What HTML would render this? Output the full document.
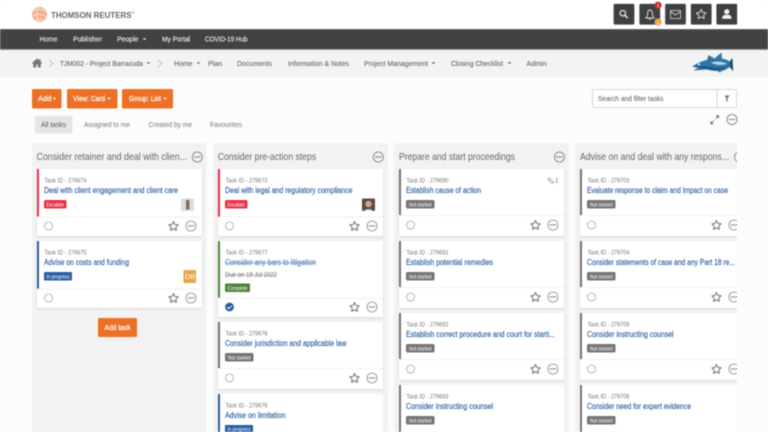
<!DOCTYPE html>
<html lang="en"><head><meta charset="utf-8"><title>Tasks</title>
<style>
html,body{margin:0;padding:0;width:768px;height:432px;overflow:hidden;background:#fcfcfc}
svg{display:block;position:absolute;left:0;top:0;filter:blur(.45px);font-family:"Liberation Sans",sans-serif}
.n{fill:#f2f2f2;font-size:7.2px;stroke:#f2f2f2;stroke-width:.1px}
.s{fill:#666;font-size:7.6px;stroke:#666;stroke-width:.1px}
.b{fill:#fff;font-size:7.6px;stroke:#fff;stroke-width:.2px}
.t{fill:#777;font-size:7.4px}
.h{fill:#666;font-size:10.4px}
.i{fill:#777;font-size:6.4px}
.k{fill:#2f60a3;font-size:8px;stroke:#2f60a3;stroke-width:.14px}
.g{fill:#fff;font-size:5.4px}
</style></head><body>
<svg width="768" height="432" viewBox="0 0 768 432" xmlns="http://www.w3.org/2000/svg">
<defs>
<filter id="sh" x="-5%" y="-10%" width="110%" height="120%"><feDropShadow dx="0" dy="1" stdDeviation="1" flood-color="#000" flood-opacity=".12"/></filter>
<g id="foot">
<circle cx="11.500" cy="0" r="4" fill="#fff" stroke="#a8a8a8" stroke-width=".8"/>
<path d="M136.500 -4.600l1.400 3 3.300.4-2.400 2.250.62 3.250-2.920-1.620-2.920 1.620.62-3.250-2.400-2.250 3.300-.4z" fill="none" stroke="#666" stroke-width=".9" stroke-linejoin="round"/>
<circle cx="154" cy="0" r="5" fill="#fff" stroke="#8a8a8a" stroke-width=".8"/>
<circle cx="151.800" cy="0" r=".7" fill="#555"/><circle cx="154" cy="0" r=".7" fill="#555"/><circle cx="156.200" cy="0" r=".7" fill="#555"/>
</g>
<g id="dots">
<circle cx="0" cy="0" r="5" fill="none" stroke="#777" stroke-width=".8"/>
<circle cx="-2.200" cy="0" r=".7" fill="#555"/><circle cx="0" cy="0" r=".7" fill="#555"/><circle cx="2.200" cy="0" r=".7" fill="#555"/>
</g>
<g id="ns"><rect x="7" y="31" width="28.500" height="8.500" rx="1.500" fill="#757575"/><text x="10" y="37.300" class="g" textLength="22.500" lengthAdjust="spacingAndGlyphs">Not started</text></g>
<g id="ip"><rect x="7" y="31" width="28" height="8.500" rx="1" fill="#2a5ea5"/><text x="9.500" y="37.300" class="g" textLength="23" lengthAdjust="spacingAndGlyphs">In progress</text></g>
<g id="es"><rect x="7" y="31" width="22.500" height="8.500" rx="1.500" fill="#ea3049"/><text x="9.500" y="37.300" class="g" textLength="17.500" lengthAdjust="spacingAndGlyphs">Escalate</text></g>
<clipPath id="board"><rect x="0" y="140" width="737" height="292"/></clipPath>
<path id="car" d="M-1.800 -.8h3.600l-1.800 2z"/>
<path id="chev" d="M-1.800 -3.600l3.600 3.600-3.600 3.600" fill="none" stroke="#aaa" stroke-width=".7"/>
</defs>

<rect x="0" y="0" width="768" height="432" fill="#fcfcfc"/>
<rect x="0" y="0" width="768" height="29" fill="#fff"/>

<!-- logo -->
<circle cx="39.500" cy="14.500" r="7.500" fill="#f4b08c"/>
<path d="M33.500 12c3-4 9-4 12 0M33 16c4-3 9-2 13 1M36 20.500c2-2 5-2 7 0M39 7.500c-3 4-3 10 0 14" fill="none" stroke="#fde9dd" stroke-width=".8"/>
<text x="51" y="17.800" fill="#666" font-size="8.500" font-weight="bold" textLength="80.500" lengthAdjust="spacingAndGlyphs">THOMSON REUTERS</text>
<text x="131.500" y="14" fill="#666" font-size="3.500">®</text>

<!-- top right buttons -->
<g fill="#404040" stroke="#ccc" stroke-width=".5">
<rect x="613.500" y="3.700" width="21" height="21" rx="1.500"/>
<rect x="639.300" y="3.700" width="21" height="21" rx="1.500"/>
<rect x="665" y="3.700" width="21" height="21" rx="1.500"/>
<rect x="690.700" y="3.700" width="21" height="21" rx="1.500"/>
<rect x="716.300" y="3.700" width="21" height="21" rx="1.500"/>
</g>
<circle cx="622.800" cy="13.200" r="2.700" fill="none" stroke="#e4e4e4" stroke-width="1.300"/>
<path d="M624.800 15.200l2.800 2.800" stroke="#e4e4e4" stroke-width="1.600"/>
<path d="M646 18h8c-1.300-1-1.500-2.500-1.600-4.500-.1-2-1-3.500-2.400-3.500s-2.300 1.500-2.400 3.500c-.1 2-.3 3.500-1.600 4.500zM648.800 19.300h2.400" fill="none" stroke="#e4e4e4" stroke-width=".9"/>
<circle cx="658" cy="5.200" r="3.600" fill="#c62f2f"/>
<circle cx="658" cy="22" r="3.600" fill="#eda33f"/>
<text x="656.900" y="7" fill="#fff" font-size="4.500">1</text>
<text x="656.900" y="23.800" fill="#fff" font-size="4.500">1</text>
<rect x="670.500" y="10.500" width="10" height="8" fill="none" stroke="#d8d8d8" stroke-width=".8"/>
<path d="M670.500 11.500l5 3.500 5-3.500" fill="none" stroke="#d8d8d8" stroke-width=".8"/>
<path d="M701.200 9.300l1.500 3.100 3.400.5-2.500 2.300.6 3.300-3-1.600-3 1.600.6-3.300-2.500-2.300 3.400-.5z" fill="none" stroke="#e4e4e4" stroke-width=".9" stroke-linejoin="round"/>
<circle cx="726.800" cy="11.700" r="2.600" fill="#f2f2f2"/>
<path d="M722 18.700c0-2.500 1.500-3.700 3-4h3.600c1.500.3 3 1.500 3 4z" fill="#f2f2f2"/>

<!-- main nav -->
<rect x="0" y="29" width="768" height="21" fill="#424242"/>
<rect x="0" y="29" width="768" height=".8" fill="#6a6a6a"/>
<rect x="0" y="49" width="768" height="1" fill="#9a9a9a"/>
<text x="39.500" y="41.500" class="n" textLength="18" lengthAdjust="spacingAndGlyphs">Home</text>
<text x="73" y="41.500" class="n" textLength="29" lengthAdjust="spacingAndGlyphs">Publisher</text>
<text x="117" y="41.500" class="n" textLength="21.500" lengthAdjust="spacingAndGlyphs">People</text>
<use href="#car" x="144.500" y="39" fill="#eee"/>
<text x="162" y="41.500" class="n" textLength="28" lengthAdjust="spacingAndGlyphs">My Portal</text>
<text x="205" y="41.500" class="n" textLength="42.500" lengthAdjust="spacingAndGlyphs">COVID-19 Hub</text>

<!-- sub nav -->
<rect x="0" y="50" width="768" height="27" fill="#f3f3f3"/>
<path d="M37 58.500l-5.200 4.500.6.700.9-.7v4.500h2.900v-2.800h1.700v2.800h2.900v-4.500l.9.700.6-.7-1.700-1.500v-2.500h-1.300v1.300z" fill="#777"/>
<use href="#chev" x="51" y="63.500"/>
<text x="60" y="66" class="s" textLength="83" lengthAdjust="spacingAndGlyphs">TJM002 - Project Barracuda</text>
<use href="#car" x="148.500" y="63" fill="#666"/>
<use href="#chev" x="160" y="63.500"/>
<text x="174" y="66" class="s" textLength="18.500" lengthAdjust="spacingAndGlyphs">Home</text>
<use href="#car" x="198.500" y="63" fill="#666"/>
<text x="208" y="66" class="s" textLength="14" lengthAdjust="spacingAndGlyphs">Plan</text>
<text x="237" y="66" class="s" textLength="35" lengthAdjust="spacingAndGlyphs">Documents</text>
<text x="288" y="66" class="s" textLength="61" lengthAdjust="spacingAndGlyphs">Information &amp; Notes</text>
<text x="364" y="66" class="s" textLength="64" lengthAdjust="spacingAndGlyphs">Project Management</text>
<use href="#car" x="433.500" y="63" fill="#666"/>
<text x="451" y="66" class="s" textLength="52" lengthAdjust="spacingAndGlyphs">Closing Checklist</text>
<use href="#car" x="509.500" y="63" fill="#666"/>
<text x="526.500" y="66" class="s" textLength="20" lengthAdjust="spacingAndGlyphs">Admin</text>

<!-- fish -->
<path d="M692 66.500c4-2.500 9-5.500 15-6.500l1.500-5 6 3.500 7-6 .5 6c3 .5 5.500 1.500 7.500 3l2.500-3.500 .7 12.500-3.200-3.500c-2.500 2-5 3.500-8 4l-1.500 1.500-2.500-1.500c-4 0-7-.5-10.500-1.500l-7 .5c-3 .3-5 .6-6 .2 1-1 3-1.700 5-2.200z" fill="#2f76a6"/>
<path d="M711 62.500c5-1.500 12-1 16 1.300-4 1.800-11.500 1.700-16-1.300z" fill="#b5d6e6"/>
<path d="M694 67.300l9-1.300 8 1c5 1.300 12 1 17-.8-4 3.300-11 4.800-18 3.300-4-.7-8-1.300-16-2.200z" fill="#1f5a82"/>
<circle cx="699" cy="64.300" r="1.100" fill="#e8f2f7"/>
<path d="M730 62l2.500-3.500.7 12.800-3.200-4z" fill="#1f4a68"/>

<!-- toolbar -->
<rect x="32" y="89" width="29.500" height="19.500" rx="1.500" fill="#ec7125"/>
<text x="38" y="101" class="b" textLength="13.500" lengthAdjust="spacingAndGlyphs">Add</text>
<use href="#car" x="54.500" y="98.500" fill="#fff"/>
<rect x="67" y="89" width="50.500" height="19.500" rx="1.500" fill="#ec7125"/>
<text x="73" y="101" class="b" textLength="32" lengthAdjust="spacingAndGlyphs">View: Card</text>
<use href="#car" x="109" y="98.500" fill="#fff"/>
<rect x="122" y="89" width="51" height="19.500" rx="1.500" fill="#ec7125"/>
<text x="129" y="101" class="b" textLength="32" lengthAdjust="spacingAndGlyphs">Group: List</text>
<use href="#car" x="165" y="98.500" fill="#fff"/>

<rect x="35" y="116" width="37.500" height="17.500" rx="1.500" fill="#e5e5e5"/>
<text x="41" y="127" class="t" style="fill:#555" textLength="25" lengthAdjust="spacingAndGlyphs">All tasks</text>
<text x="84" y="127" class="t" textLength="46" lengthAdjust="spacingAndGlyphs">Assigned to me</text>
<text x="148.500" y="127" class="t" textLength="43.500" lengthAdjust="spacingAndGlyphs">Created by me</text>
<text x="210" y="127" class="t" textLength="32" lengthAdjust="spacingAndGlyphs">Favourites</text>

<!-- search -->
<rect x="592.500" y="89.500" width="144" height="18" rx="1.500" fill="#fff" stroke="#ccc" stroke-width=".8"/>
<line x1="717" y1="89.500" x2="717" y2="107.500" stroke="#ccc" stroke-width=".8"/>
<text x="598" y="101" fill="#555" font-size="7.400" textLength="65.500" lengthAdjust="spacingAndGlyphs">Search and filter tasks</text>
<path d="M724.300 95.500h5.400l-2 2.500v3.500h-1.400v-3.500z" fill="#777"/>
<path d="M711 123.500l3-3M715.500 119l3-3" stroke="#666" stroke-width=".8"/>
<path d="M710.500 121v3.200h3.200zM719 118.500v-3.200h-3.200z" fill="#666"/>
<use href="#dots" x="732" y="119.500"/>

<!-- board -->
<g clip-path="url(#board)">
<rect x="32" y="143" width="174.500" height="289" rx="2" fill="#f2f2f2"/>
<rect x="213" y="143" width="175" height="289" rx="2" fill="#f2f2f2"/>
<rect x="394" y="143" width="175" height="289" rx="2" fill="#f2f2f2"/>
<rect x="575" y="143" width="162" height="289" rx="2" fill="#f2f2f2"/>

<text x="36.500" y="160" class="h" textLength="150.500" lengthAdjust="spacingAndGlyphs">Consider retainer and deal with clien...</text>
<use href="#dots" x="197.300" y="157"/>
<text x="217.700" y="160" class="h" textLength="98.500" lengthAdjust="spacingAndGlyphs">Consider pre-action steps</text>
<use href="#dots" x="378.300" y="157"/>
<text x="399" y="160" class="h" textLength="116" lengthAdjust="spacingAndGlyphs">Prepare and start proceedings</text>
<use href="#dots" x="559.500" y="157"/>
<text x="580" y="160" class="h" textLength="149" lengthAdjust="spacingAndGlyphs">Advise on and deal with any respons...</text>
<path d="M737 152.500a5 5 0 0 0 -2.400 4.500a5 5 0 0 0 2.400 4.500" fill="none" stroke="#777" stroke-width=".8"/>

<!-- col 1 -->
<g transform="translate(37 169)">
<rect width="165" height="67" fill="#fff" rx="1" filter="url(#sh)"/><rect y="0" width="2" height="48" fill="#ea3049"/>
<rect y="47.500" width="165" height="1" fill="#f1f1f1"/>
<text x="7.500" y="13.300" class="i" textLength="42" lengthAdjust="spacingAndGlyphs">Task ID - 279674</text>
<text x="7" y="24" class="k" textLength="134" lengthAdjust="spacingAndGlyphs">Deal with client engagement and client care</text>
<use href="#es"/>
<rect x="144" y="29.500" width="13" height="12.500" rx="1" fill="#d8dde0"/><rect x="149" y="31" width="3.500" height="9.500" fill="#8a6a55"/>
<use href="#foot" y="57"/>
</g>
<g transform="translate(37 241)">
<rect width="165" height="67" fill="#fff" rx="1" filter="url(#sh)"/><rect y="0" width="2" height="48" fill="#2d5f9e"/>
<rect y="47.500" width="165" height="1" fill="#f1f1f1"/>
<text x="7.500" y="13.300" class="i" textLength="42" lengthAdjust="spacingAndGlyphs">Task ID - 279675</text>
<text x="7" y="24" class="k" textLength="85" lengthAdjust="spacingAndGlyphs">Advise on costs and funding</text>
<use href="#ip"/>
<rect x="146.500" y="29" width="12.500" height="13" rx="1" fill="#e6a445"/>
<text x="148" y="38" fill="#fff" font-size="7.500">DB</text>
<use href="#foot" y="57"/>
</g>
<rect x="98" y="318" width="39" height="19" rx="1.500" fill="#ec7125"/>
<text x="104.500" y="330" class="b" textLength="26" lengthAdjust="spacingAndGlyphs">Add task</text>

<!-- col 2 -->
<g transform="translate(218 169)">
<rect width="165" height="67" fill="#fff" rx="1" filter="url(#sh)"/><rect y="0" width="2" height="48" fill="#ea3049"/>
<rect y="47.500" width="165" height="1" fill="#f1f1f1"/>
<text x="7.500" y="13.300" class="i" textLength="42" lengthAdjust="spacingAndGlyphs">Task ID - 279673</text>
<text x="7" y="24" class="k" textLength="127.500" lengthAdjust="spacingAndGlyphs">Deal with legal and regulatory compliance</text>
<use href="#es"/>
<rect x="144" y="29.500" width="13" height="12.500" rx="1" fill="#5d4a3c"/><circle cx="150.500" cy="35" r="3.300" fill="#c9a48e"/><path d="M146.500 42c.5-2.500 7.500-2.500 8 0z" fill="#e4ddd6"/>
<use href="#foot" y="57"/>
</g>
<g transform="translate(218 241)">
<rect width="165" height="76" fill="#fff" rx="1" filter="url(#sh)"/><rect y="0" width="2" height="57" fill="#4d8a3c"/>
<rect y="56.500" width="165" height="1" fill="#f1f1f1"/>
<text x="7.500" y="13.300" class="i" textLength="42" lengthAdjust="spacingAndGlyphs">Task ID - 279677</text>
<text x="7" y="24" class="k" style="fill:#5c86bd;stroke:#5c86bd" textLength="91" lengthAdjust="spacingAndGlyphs">Consider any bars to litigation</text>
<line x1="7" y1="21.800" x2="98" y2="21.800" stroke="#5c86bd" stroke-width=".6"/>
<text x="7" y="36" fill="#777" font-size="7" textLength="52" lengthAdjust="spacingAndGlyphs">Due on 18 Jul 2022</text>
<line x1="7" y1="34" x2="59" y2="34" stroke="#777" stroke-width=".6"/>
<rect x="7" y="42.500" width="25" height="8.500" rx="1" fill="#4d8239"/>
<text x="9.500" y="48.800" class="g" textLength="20" lengthAdjust="spacingAndGlyphs">Complete</text>
<use href="#foot" y="66"/>
<circle cx="11.500" cy="66" r="4.300" fill="#245da0"/>
<path d="M9.300 66l1.600 1.700 2.900-3" fill="none" stroke="#fff" stroke-width="1"/>
</g>
<g transform="translate(218 322)">
<rect width="165" height="67" fill="#fff" rx="1" filter="url(#sh)"/><rect y="0" width="2" height="46.500" fill="#757575"/>
<rect y="46" width="165" height="1" fill="#f1f1f1"/>
<text x="7.500" y="13.300" class="i" textLength="42" lengthAdjust="spacingAndGlyphs">Task ID - 279678</text>
<text x="7" y="24" class="k" textLength="121.500" lengthAdjust="spacingAndGlyphs">Consider jurisdiction and applicable law</text>
<use href="#ns"/>
<use href="#foot" y="56"/>
</g>
<g transform="translate(218 394)">
<rect width="165" height="38" fill="#fff"/><rect y="0" width="2" height="38" fill="#2d5f9e"/>
<text x="7.500" y="13.300" class="i" textLength="42" lengthAdjust="spacingAndGlyphs">Task ID - 279679</text>
<text x="7" y="24" class="k" textLength="60.500" lengthAdjust="spacingAndGlyphs">Advise on limitation</text>
<rect x="7" y="31" width="28" height="7" fill="#2a5ea5"/><text x="9.500" y="37" class="g" textLength="23" lengthAdjust="spacingAndGlyphs">In progress</text>
</g>

<!-- col 3 -->
<g transform="translate(399 169)">
<rect width="165" height="67" fill="#fff" rx="1" filter="url(#sh)"/><rect y="0" width="2" height="46.500" fill="#757575"/>
<rect y="46" width="165" height="1" fill="#f1f1f1"/>
<text x="7.500" y="13.300" class="i" textLength="42" lengthAdjust="spacingAndGlyphs">Task ID - 279690</text>
<text x="7" y="24" class="k" textLength="75" lengthAdjust="spacingAndGlyphs">Establish cause of action</text>
<use href="#ns"/>
<path d="M150.500 9l3.500 3.500c1 1 -.5 2.500-1.500 1.500l-3.300-3.300c-.6-.6.4-1.600 1-1z" fill="none" stroke="#999" stroke-width=".8"/>
<text x="156" y="13.500" class="i">1</text>
<use href="#foot" y="56"/>
</g>
<g transform="translate(399 241)">
<rect width="165" height="67" fill="#fff" rx="1" filter="url(#sh)"/><rect y="0" width="2" height="46.500" fill="#757575"/>
<rect y="46" width="165" height="1" fill="#f1f1f1"/>
<text x="7.500" y="13.300" class="i" textLength="42" lengthAdjust="spacingAndGlyphs">Task ID - 279691</text>
<text x="7" y="24" class="k" textLength="87" lengthAdjust="spacingAndGlyphs">Establish potential remedies</text>
<use href="#ns"/>
<use href="#foot" y="56"/>
</g>
<g transform="translate(399 313)">
<rect width="165" height="67" fill="#fff" rx="1" filter="url(#sh)"/><rect y="0" width="2" height="46.500" fill="#757575"/>
<rect y="46" width="165" height="1" fill="#f1f1f1"/>
<text x="7.500" y="13.300" class="i" textLength="42" lengthAdjust="spacingAndGlyphs">Task ID - 279692</text>
<text x="7" y="24" class="k" textLength="149" lengthAdjust="spacingAndGlyphs">Establish correct procedure and court for starti...</text>
<use href="#ns"/>
<use href="#foot" y="56"/>
</g>
<g transform="translate(399 385)">
<rect width="165" height="47" fill="#fff"/><rect y="0" width="2" height="47" fill="#757575"/>
<text x="7.500" y="13.300" class="i" textLength="42" lengthAdjust="spacingAndGlyphs">Task ID - 279693</text>
<text x="7" y="24" class="k" textLength="87" lengthAdjust="spacingAndGlyphs">Consider instructing counsel</text>
<use href="#ns"/>
</g>

<!-- col 4 -->
<g transform="translate(580 169)">
<rect width="157" height="67" fill="#fff" rx="1" filter="url(#sh)"/><rect y="0" width="2" height="46.500" fill="#757575"/>
<rect y="46" width="157" height="1" fill="#f1f1f1"/>
<text x="7.500" y="13.300" class="i" textLength="42" lengthAdjust="spacingAndGlyphs">Task ID - 279703</text>
<text x="7" y="24" class="k" textLength="141" lengthAdjust="spacingAndGlyphs">Evaluate response to claim and impact on case</text>
<use href="#ns"/>
<use href="#foot" y="56"/>
</g>
<g transform="translate(580 241)">
<rect width="157" height="67" fill="#fff" rx="1" filter="url(#sh)"/><rect y="0" width="2" height="46.500" fill="#757575"/>
<rect y="46" width="157" height="1" fill="#f1f1f1"/>
<text x="7.500" y="13.300" class="i" textLength="42" lengthAdjust="spacingAndGlyphs">Task ID - 279704</text>
<text x="7" y="24" class="k" textLength="148" lengthAdjust="spacingAndGlyphs">Consider statements of case and any Part 18 re...</text>
<use href="#ns"/>
<use href="#foot" y="56"/>
</g>
<g transform="translate(580 313)">
<rect width="157" height="67" fill="#fff" rx="1" filter="url(#sh)"/><rect y="0" width="2" height="46.500" fill="#757575"/>
<rect y="46" width="157" height="1" fill="#f1f1f1"/>
<text x="7.500" y="13.300" class="i" textLength="42" lengthAdjust="spacingAndGlyphs">Task ID - 279705</text>
<text x="7" y="24" class="k" textLength="86.500" lengthAdjust="spacingAndGlyphs">Consider instructing counsel</text>
<use href="#ns"/>
<use href="#foot" y="56"/>
</g>
<g transform="translate(580 385)">
<rect width="157" height="47" fill="#fff"/><rect y="0" width="2" height="47" fill="#757575"/>
<text x="7.500" y="13.300" class="i" textLength="42" lengthAdjust="spacingAndGlyphs">Task ID - 279706</text>
<text x="7" y="24" class="k" textLength="104" lengthAdjust="spacingAndGlyphs">Consider need for expert evidence</text>
<use href="#ns"/>
</g>
</g>
</svg>
</body></html>
